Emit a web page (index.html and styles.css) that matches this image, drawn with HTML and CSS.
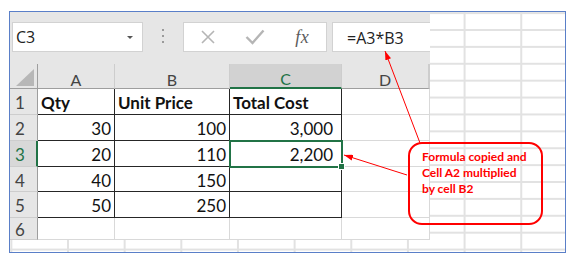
FILE: index.html
```html
<!DOCTYPE html>
<html lang="en">
<head>
  <meta charset="UTF-8" />
  <title>Formula copied</title>
  <link rel="stylesheet" href="styles.css">
</head>
<body>
  <div class="frame">
    <div class="excel">
      <div class="toolbar">
        <div class="namebox">
          <span class="ref">C3</span>
          <span class="caret"></span>
        </div>
        <div class="dots"><i></i><i></i><i></i></div>
        <div class="fxbox">
          <span class="btn">
            <svg width="14" height="14" viewBox="0 0 14 14"><path d="M1 1 L13 13 M13 1 L1 13" stroke="#b5b5b5" stroke-width="1.6" fill="none"/></svg>
          </span>
          <span class="btn">
            <svg width="20" height="16" viewBox="0 0 20 16"><path d="M1.5 8 L7.5 14 L18.5 1.5" stroke="#b5b5b5" stroke-width="2.4" fill="none"/></svg>
          </span>
          <span class="btn fx">fx</span>
        </div>
        <div class="formula">=A3*B3</div>
      </div>
      <div class="sheet">
        <div class="corner"><span class="tri"></span></div>
        <div class="ch">A</div>
        <div class="ch">B</div>
        <div class="ch active">C</div>
        <div class="ch last">D</div>

        <div class="rh">1</div>
        <div class="cell t bold">Qty</div>
        <div class="cell t bold">Unit Price</div>
        <div class="cell t bold">Total Cost</div>
        <div class="cell"></div>

        <div class="rh">2</div>
        <div class="cell t num">30</div>
        <div class="cell t num">100</div>
        <div class="cell t num wide">3,000</div>
        <div class="cell"></div>

        <div class="rh active">3</div>
        <div class="cell t num">20</div>
        <div class="cell t num">110</div>
        <div class="cell t num wide sel">2,200</div>
        <div class="cell"></div>

        <div class="rh">4</div>
        <div class="cell t num">40</div>
        <div class="cell t num">150</div>
        <div class="cell t"></div>
        <div class="cell"></div>

        <div class="rh">5</div>
        <div class="cell t num">50</div>
        <div class="cell t num">250</div>
        <div class="cell t"></div>
        <div class="cell"></div>

        <div class="rh">6</div>
        <div class="cell"></div>
        <div class="cell"></div>
        <div class="cell"></div>
        <div class="cell"></div>
      </div>
    </div>

    <div class="callout">Formula copied and<br>Cell A2 multiplied<br>by cell B2</div>

    <svg class="arrows" width="555" height="240" viewBox="0 0 555 240">
      <defs>
        <marker id="head" markerWidth="9" markerHeight="6" refX="9" refY="3" orient="auto" markerUnits="userSpaceOnUse">
          <path d="M0 0 L9 3 L0 6 Z" fill="#ff0000"/>
        </marker>
      </defs>
      <line x1="410" y1="131" x2="375" y2="39" stroke="#ff0000" stroke-width="1" marker-end="url(#head)"/>
      <line x1="397" y1="163" x2="334" y2="143" stroke="#ff0000" stroke-width="1" marker-end="url(#head)"/>
    </svg>
  </div>
</body>
</html>
```

FILE: styles.css
```css
body {
  margin: 0;
  background-color: #ffffff;
  font-family: 'Lato', 'Liberation Sans', sans-serif;
}
.frame {
  position: relative;
  width: 555px;
  height: 240px;
  margin: 11px 0 0 9px;
  border: 1px solid #5a7fc8;
  overflow: hidden;
  background-color: #ffffff;
  background-image:
    linear-gradient(to right, #e2e2e2 2px, transparent 2px),
    linear-gradient(to bottom, #e2e2e2 2px, transparent 2px);
  background-size: 56.67px 16.9px;
  background-position: 57px 17px;
}
.excel {
  width: 420px;
  height: 228px;
  background-color: #e6e6e6;
  overflow: hidden;
}
.toolbar {
  display: flex;
  align-items: flex-start;
  height: 52px;
  padding-top: 10px;
  box-sizing: border-box;
  font-family: 'Open Sans', 'Liberation Sans', sans-serif;
  font-size: 16px;
  color: #222;
}
.namebox {
  display: flex;
  align-items: center;
  justify-content: space-between;
  width: 131px;
  height: 30px;
  margin-left: 2px;
  padding: 0 9px 0 3px;
  box-sizing: border-box;
  background-color: #ffffff;
  border: 1px solid #d2d2d2;
}
.caret {
  width: 0;
  height: 0;
  border-left: 3px solid transparent;
  border-right: 3px solid transparent;
  border-top: 3px solid #555;
}
.dots {
  display: flex;
  flex-direction: column;
  align-items: center;
  gap: 4px;
  width: 40px;
  padding-top: 7px;
}
.dots i {
  width: 2px;
  height: 2px;
  background-color: #9a9a9a;
}
.fxbox {
  display: flex;
  width: 144px;
  height: 30px;
  box-sizing: border-box;
  background-color: #ffffff;
  border: 1px solid #d2d2d2;
}
.btn {
  display: flex;
  align-items: center;
  justify-content: center;
  width: 48px;
}
.btn.fx {
  font-family: 'Liberation Serif', serif;
  font-style: italic;
  font-size: 18px;
  color: #5c5c5c;
  letter-spacing: 0.5px;
}
.formula {
  flex: 1;
  height: 30px;
  margin-left: 5px;
  padding-left: 14px;
  line-height: 30px;
  box-sizing: border-box;
  background-color: #ffffff;
  border: 1px solid #d2d2d2;
  border-right: none;
}
.sheet {
  display: grid;
  grid-template-columns: 28px 77px 115px 112px 88px;
  grid-template-rows: 25px 26px 26px 26px 25px 26px 22px;
  font-size: 17px;
  color: #111;
}
.sheet > div {
  box-sizing: border-box;
  display: flex;
  align-items: center;
}
.corner {
  justify-content: flex-end;
  align-items: flex-end !important;
  padding: 0 3px 2px 0;
  border-right: 1px solid #9e9e9e;
  border-bottom: 1px solid #9e9e9e;
  background-color: #e6e6e6;
}
.tri {
  width: 18px;
  height: 17px;
  background-color: #b7b7b7;
  clip-path: polygon(100% 0, 100% 100%, 0 100%);
}
.ch {
  justify-content: center;
  padding-top: 6px;
  font-size: 16px;
  color: #444;
  background-color: #e6e6e6;
  border-right: 1px solid #cdcdcd;
  border-bottom: 1px solid #9e9e9e;
}
.ch.active {
  color: #217346;
  background-color: #d2d2d2;
  border-bottom: 2px solid #217346;
}
.ch.last {
  border-right: 2px solid #cdcdcd;
}
.rh {
  padding: 2px 0 0 5px;
  font-size: 17px;
  color: #444;
  background-color: #e6e6e6;
  border-right: 1px solid #9e9e9e;
  border-bottom: 1px solid #cdcdcd;
}
.rh.active {
  color: #217346;
  background-color: #d8d8d8;
  border-right: 2px solid #217346;
}
.cell {
  padding: 2px 3px 0 3px;
  background-color: #ffffff;
  border-right: 1px solid #d9d9d9;
  border-bottom: 1px solid #d9d9d9;
  white-space: nowrap;
}
.cell.t {
  border-right-color: #262626;
  border-bottom-color: #262626;
}
.cell.bold {
  font-weight: bold;
}
.cell.num {
  justify-content: flex-end;
}
.cell.wide {
  padding-right: 8px;
}
.cell.sel {
  position: relative;
  z-index: 1;
  outline: 2px solid #217346;
  outline-offset: -1px;
}
.cell.sel::after {
  content: '';
  position: absolute;
  right: -4px;
  bottom: -4px;
  width: 5px;
  height: 5px;
  background-color: #217346;
  border: 1px solid #ffffff;
}
.callout {
  position: absolute;
  left: 398px;
  top: 130px;
  width: 135px;
  height: 83px;
  box-sizing: border-box;
  padding: 5px 0 0 12px;
  border: 2px solid #ff0000;
  border-radius: 14px;
  font-size: 12px;
  font-weight: bold;
  line-height: 16px;
  color: #ff0000;
}
.arrows {
  position: absolute;
  left: 0;
  top: 0;
  pointer-events: none;
}
```
